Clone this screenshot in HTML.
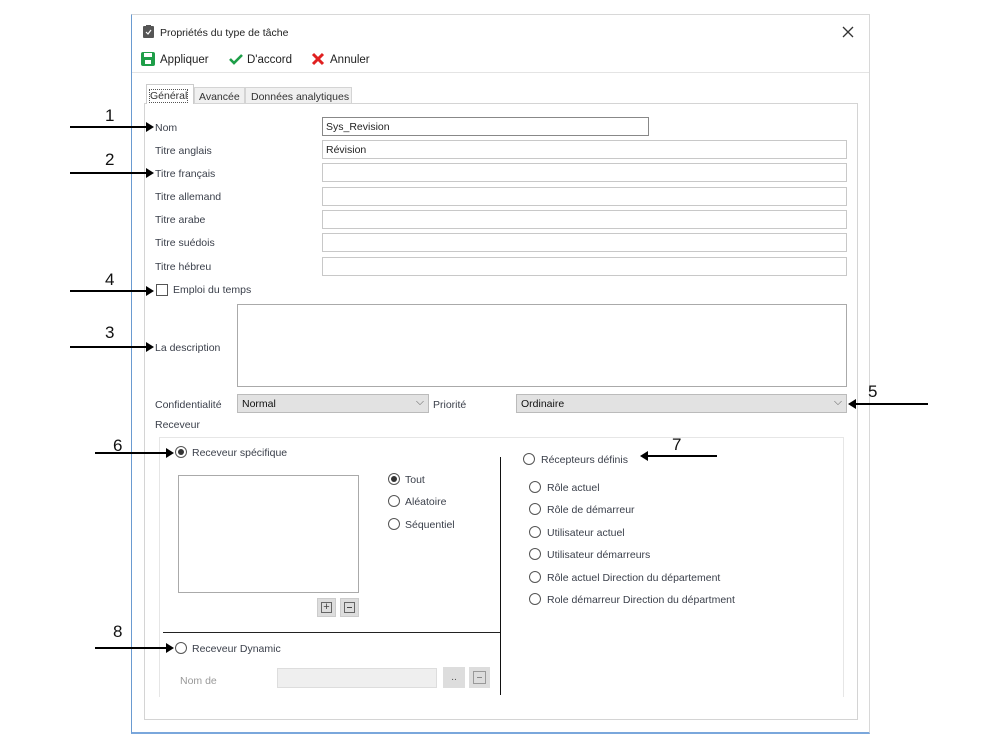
<!DOCTYPE html>
<html><head><meta charset="utf-8"><style>
*{margin:0;padding:0;box-sizing:border-box}
body{width:1000px;height:750px;background:#fff;position:relative;overflow:hidden;font-family:"Liberation Sans",sans-serif;font-size:10.5px;color:#333}
.a{position:absolute;white-space:nowrap}
.lbl{position:absolute;line-height:14px;color:#3a3f4a;padding-top:1px}
.inp{position:absolute;height:19px;border:1px solid #c8c8c8;background:#fff;padding:3px 3px 2px;line-height:13px;color:#222}
.num{position:absolute;font-size:17px;color:#111;line-height:18px}
.arr{position:absolute;height:2px;background:#000}
.rad{position:absolute;width:12px;height:12px;border:1px solid #555;border-radius:50%;background:#fff}
.rad.on::after{content:"";position:absolute;left:2px;top:2px;width:6px;height:6px;border-radius:50%;background:#333}
.sel{position:absolute;height:19px;border:1px solid #bbb;background:#e2e2e2;padding:3px 4px 2px;line-height:13px;color:#111}
</style></head><body>
<div class="a" style="left:131px;top:14px;width:739px;height:720px;border-left:1px solid #6a9bd1;border-top:1px solid #d8d8d8;border-right:1px solid #d8d8d8;border-bottom:2px solid #7aa7dc"></div>
<svg class="a" style="left:143px;top:25px" width="11" height="13"><rect x="0" y="1" width="11" height="12" rx="1" fill="#555"/><rect x="3" y="0" width="5" height="3" fill="#555"/><path d="M3 7 L5 9 L8 5" stroke="#fff" stroke-width="1.2" fill="none"/></svg>
<div class="lbl" style="left:160px;top:25px;color:#222">Propriétés du type de tâche</div>
<svg class="a" style="left:842px;top:26px" width="12" height="12"><path d="M1 1 L11 11 M11 1 L1 11" stroke="#333" stroke-width="1.3"/></svg>
<svg class="a" style="left:141px;top:52px" width="14" height="14"><rect width="14" height="14" rx="2" fill="#1e9e48"/><rect x="3" y="1" width="8" height="4" fill="#fff"/><rect x="4" y="8" width="6" height="4" fill="#fff"/></svg>
<div class="lbl" style="left:160px;top:52px;font-size:11.5px;color:#222">Appliquer</div>
<svg class="a" style="left:229px;top:53px" width="14" height="12"><path d="M1 6 L5 10 L13 2" stroke="#1e9e48" stroke-width="2.6" fill="none"/></svg>
<div class="lbl" style="left:247px;top:52px;font-size:11.5px;color:#222">D'accord</div>
<svg class="a" style="left:311px;top:52px" width="14" height="14"><path d="M2 2 L12 12 M12 2 L2 12" stroke="#e02020" stroke-width="3"/></svg>
<div class="lbl" style="left:330px;top:52px;font-size:11.5px;color:#222">Annuler</div>
<div class="a" style="left:132px;top:72px;width:737px;height:1px;background:#e4e4e4"></div>
<div class="a" style="left:144px;top:103px;width:714px;height:617px;border:1px solid #d4d4d4;background:#fff"></div>
<div class="a" style="left:146px;top:84px;width:48px;height:20px;border:1px solid #ccc;border-bottom:none;background:#fff;padding:5px 3px"><span style="outline:1px dotted #555;line-height:12px">Général</span></div>
<div class="a" style="left:194px;top:87px;width:51px;height:17px;border:1px solid #d4d4d4;background:#f0f0f0;padding:3px 4px">Avancée</div>
<div class="a" style="left:245px;top:87px;width:107px;height:17px;border:1px solid #d4d4d4;background:#f0f0f0;padding:3px 5px">Données analytiques</div>
<div class="lbl" style="left:155px;top:120px">Nom</div>
<div class="inp" style="left:322px;top:117px;width:327px;border-color:#888">Sys_Revision</div>
<div class="lbl" style="left:155px;top:143px">Titre anglais</div>
<div class="inp" style="left:322px;top:140px;width:525px">Révision</div>
<div class="lbl" style="left:155px;top:166px">Titre français</div>
<div class="inp" style="left:322px;top:163px;width:525px"></div>
<div class="lbl" style="left:155px;top:189px">Titre allemand</div>
<div class="inp" style="left:322px;top:187px;width:525px"></div>
<div class="lbl" style="left:155px;top:212px">Titre arabe</div>
<div class="inp" style="left:322px;top:210px;width:525px"></div>
<div class="lbl" style="left:155px;top:235px">Titre suédois</div>
<div class="inp" style="left:322px;top:233px;width:525px"></div>
<div class="lbl" style="left:155px;top:259px">Titre hébreu</div>
<div class="inp" style="left:322px;top:257px;width:525px"></div>
<div class="a" style="left:156px;top:284px;width:12px;height:12px;border:1px solid #555;background:#fff"></div>
<div class="lbl" style="left:173px;top:282px">Emploi du temps</div>
<div class="lbl" style="left:155px;top:340px">La description</div>
<div class="inp" style="left:237px;top:304px;width:610px;height:83px;border-color:#aaa"></div>
<div class="lbl" style="left:155px;top:397px">Confidentialité</div>
<div class="sel" style="left:237px;top:394px;width:192px">Normal<span style="position:absolute;right:4px;top:1px;color:#666">⌵</span></div>
<div class="lbl" style="left:433px;top:397px">Priorité</div>
<div class="sel" style="left:516px;top:394px;width:331px">Ordinaire<span style="position:absolute;right:4px;top:1px;color:#666">⌵</span></div>
<div class="lbl" style="left:155px;top:417px">Receveur</div>
<div class="a" style="left:159px;top:437px;width:685px;height:260px;border:1px solid #e6e6e6;border-bottom:none"></div>
<div class="a" style="left:500px;top:457px;width:1px;height:238px;background:#111"></div>
<div class="a" style="left:163px;top:632px;width:337px;height:1px;background:#222"></div>
<div class="rad on" style="left:175px;top:446px"></div>
<div class="lbl" style="left:192px;top:445px">Receveur spécifique</div>
<div class="a" style="left:178px;top:475px;width:181px;height:118px;border:1px solid #aaa"></div>
<div class="a" style="left:317px;top:598px;width:19px;height:19px;background:#ddd;border:1px solid #ccc"><div style="position:absolute;left:3px;top:3px;width:11px;height:11px;border:1px solid #666;font-size:11px;line-height:9px;text-align:center;color:#444">+</div></div>
<div class="a" style="left:340px;top:598px;width:19px;height:19px;background:#ddd;border:1px solid #ccc"><div style="position:absolute;left:3px;top:3px;width:11px;height:11px;border:1px solid #666"><div style="position:absolute;left:2px;top:4px;width:5px;height:1px;background:#444"></div></div></div>
<div class="rad on" style="left:388px;top:473px"></div><div class="lbl" style="left:405px;top:472px">Tout</div>
<div class="rad" style="left:388px;top:495px"></div><div class="lbl" style="left:405px;top:494px">Aléatoire</div>
<div class="rad" style="left:388px;top:518px"></div><div class="lbl" style="left:405px;top:517px">Séquentiel</div>
<div class="rad" style="left:523px;top:453px"></div><div class="lbl" style="left:541px;top:452px">Récepteurs définis</div>
<div class="rad" style="left:529px;top:481px"></div><div class="lbl" style="left:547px;top:480px">Rôle actuel</div>
<div class="rad" style="left:529px;top:503px"></div><div class="lbl" style="left:547px;top:502px">Rôle de démarreur</div>
<div class="rad" style="left:529px;top:526px"></div><div class="lbl" style="left:547px;top:525px">Utilisateur actuel</div>
<div class="rad" style="left:529px;top:548px"></div><div class="lbl" style="left:547px;top:547px">Utilisateur démarreurs</div>
<div class="rad" style="left:529px;top:571px"></div><div class="lbl" style="left:547px;top:570px">Rôle actuel Direction du département</div>
<div class="rad" style="left:529px;top:593px"></div><div class="lbl" style="left:547px;top:592px">Role démarreur Direction du départment</div>
<div class="rad" style="left:175px;top:642px"></div><div class="lbl" style="left:192px;top:641px">Receveur Dynamic</div>
<div class="lbl" style="left:180px;top:673px;color:#999">Nom de</div>
<div class="a" style="left:277px;top:668px;width:160px;height:20px;background:#efefef;border:1px solid #ddd"></div>
<div class="a" style="left:443px;top:667px;width:22px;height:21px;background:#ddd;text-align:center;line-height:21px;color:#555">..</div>
<div class="a" style="left:469px;top:667px;width:21px;height:21px;background:#ddd"><div style="position:absolute;left:4px;top:4px;width:13px;height:13px;border:1px solid #999"><div style="position:absolute;left:3px;top:5px;width:5px;height:1px;background:#888"></div></div></div>
<div class="num" style="left:105px;top:107px">1</div>
<div class="arr" style="left:70px;top:126px;width:78px"></div><div class="a" style="left:146px;top:122px;border-left:8px solid #000;border-top:5px solid transparent;border-bottom:5px solid transparent"></div>
<div class="num" style="left:105px;top:151px">2</div>
<div class="arr" style="left:70px;top:172px;width:78px"></div><div class="a" style="left:146px;top:168px;border-left:8px solid #000;border-top:5px solid transparent;border-bottom:5px solid transparent"></div>
<div class="num" style="left:105px;top:271px">4</div>
<div class="arr" style="left:70px;top:290px;width:78px"></div><div class="a" style="left:146px;top:286px;border-left:8px solid #000;border-top:5px solid transparent;border-bottom:5px solid transparent"></div>
<div class="num" style="left:105px;top:324px">3</div>
<div class="arr" style="left:70px;top:346px;width:78px"></div><div class="a" style="left:146px;top:342px;border-left:8px solid #000;border-top:5px solid transparent;border-bottom:5px solid transparent"></div>
<div class="num" style="left:868px;top:383px">5</div>
<div class="arr" style="left:856px;top:403px;width:72px"></div><div class="a" style="left:848px;top:399px;border-right:8px solid #000;border-top:5px solid transparent;border-bottom:5px solid transparent"></div>
<div class="num" style="left:113px;top:437px">6</div>
<div class="arr" style="left:95px;top:452px;width:72px"></div><div class="a" style="left:166px;top:448px;border-left:8px solid #000;border-top:5px solid transparent;border-bottom:5px solid transparent"></div>
<div class="num" style="left:672px;top:436px">7</div>
<div class="arr" style="left:648px;top:455px;width:69px"></div><div class="a" style="left:640px;top:451px;border-right:8px solid #000;border-top:5px solid transparent;border-bottom:5px solid transparent"></div>
<div class="num" style="left:113px;top:623px">8</div>
<div class="arr" style="left:95px;top:647px;width:72px"></div><div class="a" style="left:166px;top:643px;border-left:8px solid #000;border-top:5px solid transparent;border-bottom:5px solid transparent"></div>
</body></html>
